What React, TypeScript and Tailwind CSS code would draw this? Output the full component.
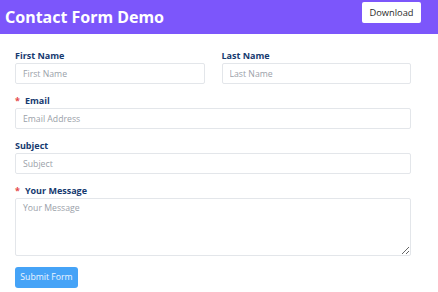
import React from "react";

const label = "block text-[9px] font-bold leading-[12px] text-[#163a70]";
const field =
  "mt-[1px] block w-full h-[21px] rounded-[2px] border border-[#e3e6ea] bg-white px-[7px] text-[8.7px] text-[#333] placeholder:text-[#9aa1a9] outline-none";

function Required() {
  return <span className="mr-[5px] text-[#e5484d]">*</span>;
}

export default function App() {
  return (
    <div className="min-h-screen bg-white" style={{ fontFamily: "'Open Sans', 'Liberation Sans', sans-serif" }}>
      <header className="flex h-[34px] items-center justify-between bg-[#7c56fb] pl-[5px] pr-[17px]">
        <h1
          className="text-[16px] font-bold text-white"
          style={{ fontFamily: "'Noto Sans', 'Liberation Sans', sans-serif" }}
        >
          Contact Form Demo
        </h1>
        <button className="-mt-[9px] h-[21px] w-[59px] rounded-[2px] bg-white text-[9.3px] text-[#2a2a2a]">
          Download
        </button>
      </header>

      <form className="flex flex-col gap-[11px] pl-[15px] pr-[27px] pt-[16px]">
        <div className="grid grid-cols-2 gap-[17px]">
          <div>
            <label className={label}>First Name</label>
            <input className={field} placeholder="First Name" />
          </div>
          <div>
            <label className={label}>Last Name</label>
            <input className={field} placeholder="Last Name" />
          </div>
        </div>

        <div>
          <label className={label}>
            <Required />
            Email
          </label>
          <input className={field} placeholder="Email Address" />
        </div>

        <div>
          <label className={label}>Subject</label>
          <input className={field} placeholder="Subject" />
        </div>

        <div>
          <label className={label}>
            <Required />
            Your Message
          </label>
          <textarea
            className="mt-[1px] block h-[58px] w-full rounded-[2px] border border-[#e3e6ea] bg-white px-[7px] py-[3px] text-[8.7px] text-[#333] placeholder:text-[#9aa1a9] outline-none"
            placeholder="Your Message"
          />
        </div>

        <button
          type="button"
          className="block h-[21px] w-[63px] rounded-[3px] bg-[#45a3f7] text-[8.7px] text-[#eef6ff]"
        >
          Submit Form
        </button>
      </form>
    </div>
  );
}
